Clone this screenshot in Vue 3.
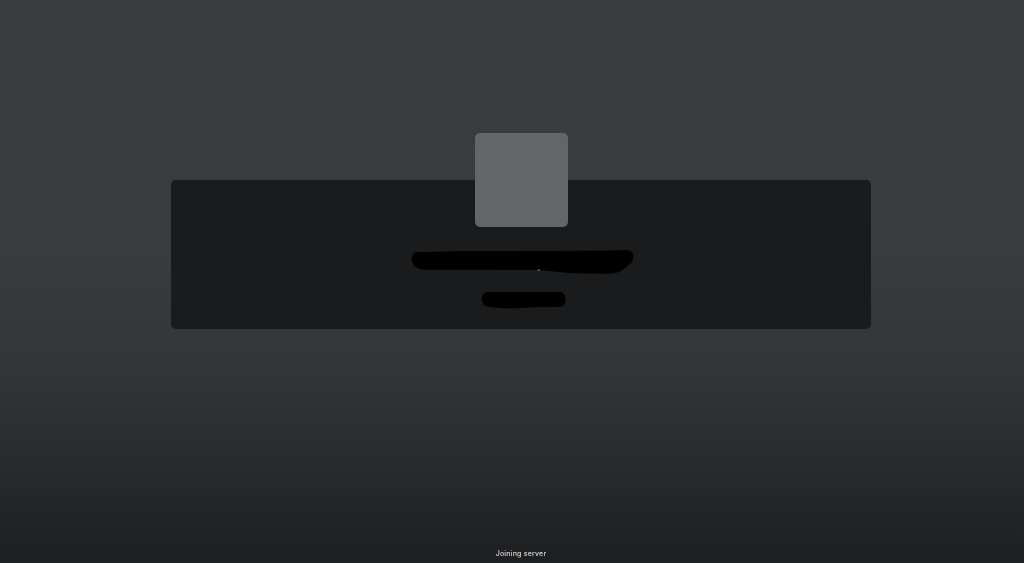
<script setup>
const statusText = 'Joining server'
</script>

<template>
  <main class="page">
    <section class="stage">
      <div class="avatar"></div>
      <div class="panel">
        <svg class="scribble first" width="224" height="25" viewBox="0 0 224 25" aria-hidden="true">
          <path fill="#000" d="M0.7 8.3 C1 4.5 3 2.6 5.7 2.3 L52 1 L192 0.7 L215.7 0 C220 0.2 222.5 3 222.3 6.7 C222.2 10 221 12.5 219 14 C215 17 211 21 207 22.3 C203 23.5 199 23.8 195.7 23.7 L162 23.3 C150 22.5 138 20.6 125.7 20 L79 19.8 L12 19.8 C7 19.2 3.5 16.5 2 14 C1 12 0.6 10 0.7 8.3 Z" />
          <rect x="126.5" y="19.6" width="2.5" height="1" fill="#8a8a8a" />
        </svg>
        <svg class="scribble second" width="86" height="18" viewBox="0 0 86 18" aria-hidden="true">
          <path fill="#000" d="M0.7 8.3 C0.8 4 3.5 1.2 7.3 1 L79 1 C82.5 1.2 84.7 4.5 84.7 8.3 C84.7 12 83 15 80.7 15.7 L52 16.3 C42 17 32 17.6 22 17.3 L6.3 15.7 C3 14.8 0.8 12 0.7 8.3 Z" />
        </svg>
      </div>
    </section>
    <p class="status">{{ statusText }}</p>
  </main>
</template>

<style scoped>
.page {
  box-sizing: border-box;
  width: 1024px;
  height: 563px;
  overflow: hidden;
  display: flex;
  flex-direction: column;
  padding: 133px 0 4px 171px;
  background: linear-gradient(180deg, #3b3c3e 0%, #3a3b3d 45%, #343537 65%, #1e1f21 100%);
}
.stage {
  width: 700px;
  display: flex;
  flex-direction: column;
  align-items: center;
}
.avatar {
  position: relative;
  z-index: 1;
  width: 93px;
  height: 94px;
  margin-bottom: -47px;
  border-radius: 5px;
  background: #646567;
}
.panel {
  box-sizing: border-box;
  width: 700px;
  height: 149px;
  padding-top: 70px;
  display: flex;
  flex-direction: column;
  align-items: center;
  gap: 16px;
  border-radius: 5px;
  background: #1a1b1d;
}
.scribble {
  display: block;
}
.first {
  margin-left: 4px;
}
.second {
  margin-left: 6px;
}
.status {
  width: 700px;
  margin: auto 0 0;
  text-align: center;
  font-family: "Inter", "Noto Sans", sans-serif;
  font-size: 7px;
  font-weight: 500;
  line-height: 10px;
  letter-spacing: 0.2px;
  color: #fff;
  opacity: 0.8;
  will-change: opacity;
}
</style>
